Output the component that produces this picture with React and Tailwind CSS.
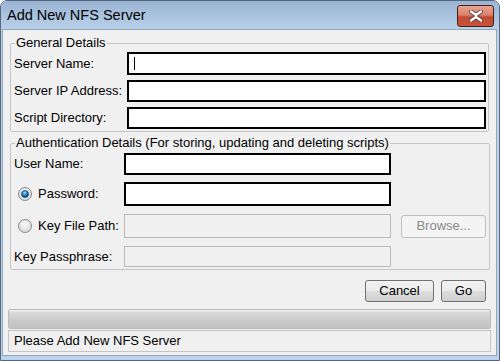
import React from 'react';

const font = { fontFamily: '"Liberation Sans", Arial, sans-serif' };

function Radio({ checked }) {
    return (
        <svg width="14" height="14" viewBox="0 0 14 14" className="shrink-0">
            <defs>
                <radialGradient id="rOff" cx="50%" cy="40%" r="60%">
                    <stop offset="0%" stopColor="#ffffff" />
                    <stop offset="100%" stopColor="#d4d4d4" />
                </radialGradient>
                <radialGradient id="rOn" cx="45%" cy="35%" r="60%">
                    <stop offset="0%" stopColor="#b8e6ff" />
                    <stop offset="45%" stopColor="#2a8fd0" />
                    <stop offset="100%" stopColor="#0b3d6b" />
                </radialGradient>
            </defs>
            <circle cx="7" cy="7" r="6.5" fill="url(#rOff)" stroke="#8a8a8a" />
            {checked && <circle cx="7" cy="7" r="3.6" fill="url(#rOn)" stroke="#124a78" strokeWidth="0.6" />}
        </svg>
    );
}

function TextBox({ className = '', children }) {
    return <div className={`flex items-center border-2 border-black bg-white ${className}`}>{children}</div>;
}

function DisabledBox({ className = '' }) {
    return <div className={`border border-[#b9b9b9] bg-[#f0f0f0] ${className}`} />;
}

function Button({ children, className = '', disabled }) {
    return (
        <div
            className={`flex items-center justify-center rounded-[3px] border text-[13px] ${disabled
                ? 'border-[#bfbfbf] bg-[#f4f4f4] text-[#8a8a8a]'
                : 'border-[#707070] bg-[linear-gradient(#f2f2f2_0%,#ebebeb_50%,#dddddd_51%,#cfcfcf_100%)] text-black'} ${className}`}
        >
            {children}
        </div>
    );
}

export default function App() {
    return (
        <div style={font} className="flex h-[361px] w-[500px] flex-col overflow-hidden rounded-t-[7px] border border-[#56677b] bg-[#bcd3eb] text-[13px] text-black">
            {/* title bar */}
            <div className="flex h-[28px] items-start justify-between bg-[linear-gradient(#99b4d3,#b9d0e9)] pl-[6px] pr-[5px]">
                <span className="mt-[5px] text-[14.5px] leading-[18px] text-black">Add New NFS Server</span>
                <div className="mt-[4px] flex h-[22px] w-[37px] items-center justify-center rounded-[3px] border border-[#4a1d17] bg-[linear-gradient(#e8a493_0%,#d9826d_45%,#c24a33_55%,#c8533a_100%)]">
                    <svg width="16" height="12" viewBox="0 0 16 12">
                        <path d="M3 1.5 L8 5 L13 1.5 M3 10.5 L8 7 L13 10.5" stroke="#5a3a36" strokeWidth="4" fill="none" strokeLinecap="round" strokeLinejoin="round" />
                        <path d="M3 1.5 L8 5 L13 1.5 M3 10.5 L8 7 L13 10.5" stroke="#ffffff" strokeWidth="2.4" fill="none" strokeLinecap="round" strokeLinejoin="round" />
                    </svg>
                </div>
            </div>

            {/* client area */}
            <div className="mb-[4px] ml-[1px] mr-[2px] flex flex-1 flex-col border border-[#8fa6c1] bg-[#f0f0f0]">
                <div className="px-[7px] pt-[6px]">
                    <fieldset className="rounded-[2px] border border-[#c4c4c4] pb-[2px] pl-[3px] pr-[2px] pt-[2px]">
                        <legend className="ml-[1px] px-[1px] leading-[14px]">General Details</legend>
                        <div className="grid grid-cols-[113px_1fr] items-center gap-y-[5px]">
                            <span>Server Name:</span>
                            <TextBox className="h-[23px]"><div className="ml-[5px] h-[13px] w-px bg-black" /></TextBox>
                            <span>Server IP Address:</span>
                            <TextBox className="h-[22px]" />
                            <span>Script Directory:</span>
                            <TextBox className="h-[22px]" />
                        </div>
                    </fieldset>

                    <fieldset className="mt-[4px] rounded-[2px] border border-[#c4c4c4] pb-[2px] pl-[3px] pr-[3px] pt-[3px]">
                        <legend className="ml-[1px] px-[1px] leading-[14px]">Authentication Details (For storing, updating and deleting scripts)</legend>
                        <div className="flex items-center">
                            <span className="w-[110px]">User Name:</span>
                            <TextBox className="h-[22px] w-[267px]" />
                        </div>
                        <div className="mt-[7px] flex items-center">
                            <div className="flex w-[110px] items-center gap-[6px] pl-[4px]">
                                <Radio checked />
                                <span>Password:</span>
                            </div>
                            <TextBox className="h-[24px] w-[267px]" />
                        </div>
                        <div className="mt-[8px] flex items-center">
                            <div className="flex w-[110px] items-center gap-[6px] pl-[4px]">
                                <Radio />
                                <span>Key File Path:</span>
                            </div>
                            <DisabledBox className="h-[24px] w-[267px]" />
                            <Button disabled className="ml-[10px] h-[23px] w-[85px]">Browse...</Button>
                        </div>
                        <div className="mt-[8px] flex items-center">
                            <span className="w-[110px]">Key Passphrase:</span>
                            <DisabledBox className="h-[21px] w-[267px]" />
                        </div>
                    </fieldset>
                </div>

                <div className="mt-[10px] flex justify-end gap-[7px] pr-[10px]">
                    <Button className="h-[22px] w-[69px]">Cancel</Button>
                    <Button className="h-[22px] w-[45px]">Go</Button>
                </div>

                <div className="mx-[5px] mt-[7px] h-[20px] rounded-[2px] border border-[#bcbcbc] bg-[linear-gradient(#f3f3f3_0%,#d8d8d8_15%,#cacaca_60%,#c2c2c2_100%)]" />
                <div className="mx-[5px] mt-[1px] flex h-[22px] items-center border border-[#c4c4c4] pl-[5px]">
                    Please Add New NFS Server
                </div>
            </div>
        </div>
    );
}
